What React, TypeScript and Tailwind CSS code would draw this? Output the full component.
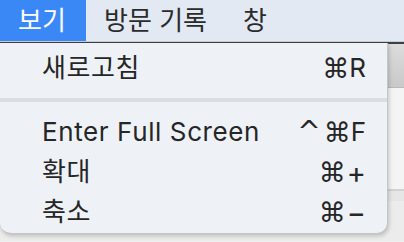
import React from "react";

const font = { fontFamily: 'Inter, "Noto Sans CJK KR", "DejaVu Sans", sans-serif' };

function Item({ label, shortcut }: { label: string; shortcut: React.ReactNode }) {
  return (
    <div className="flex h-[40px] items-center justify-between pl-[42px] pr-[21px]">
      <span className="text-[26px] leading-none tracking-[0.6px] text-[#262626]">{label}</span>
      <span className="flex items-center text-[26px] leading-none text-[#262626]">{shortcut}</span>
    </div>
  );
}

const Cmd = () => <span className="text-[27px] font-medium" style={{ fontFamily: '"DejaVu Sans", sans-serif' }}>⌘</span>;

export default function App() {
  return (
    <div className="relative h-[242px] w-[404px] overflow-hidden bg-[#f0f0f0]" style={font}>
      {/* menu bar */}
      <div className="flex h-[42px] items-stretch border-b border-[#c9ccd0] bg-[#e3e9f2] text-[26px] text-[#2b2b2b]">
        <div className="flex w-[86px] items-center justify-center bg-[#3a88f6] pr-[2px] text-white">보기</div>
        <div className="flex items-center pl-[18px]">방문 기록</div>
        <div className="flex items-center pl-[36px]">창</div>
      </div>
      {/* window content behind */}
      <div className="flex flex-col">
        <div className="h-[2px] bg-[#3c4148]" />
        <div className="h-[44px] border-b border-[#b8b8b8] bg-gradient-to-b from-[#dcdcdc] to-[#c9c9c9]" />
        <div className="h-[101px] bg-[#f4f4f4]" />
        <div className="h-[2px] bg-[#d2d2d2]" />
        <div className="h-[10px] bg-[#e6e6e6]" />
        <div className="h-[40px] bg-[#ececec]" />
      </div>
      {/* dropdown menu */}
      <div className="absolute left-0 top-[43px] w-[388px] rounded-b-[11px] border-r border-b border-[#c2c5c9] bg-[#eef2f6] pt-[5px] pb-[1px] shadow-[1px_2px_4px_rgba(0,0,0,0.2)]">
        <Item label="새로고침" shortcut={<><Cmd /><span>R</span></>} />
        <div className="flex h-[24px] items-center">
          <div className="h-[4px] w-full bg-[#dadee2]" />
        </div>
        <Item
          label="Enter Full Screen"
          shortcut={<><span className="mr-[3px] text-[28px]" style={{ fontFamily: '"DejaVu Sans", sans-serif' }}>^</span><Cmd /><span>F</span></>}
        />
        <Item label="확대" shortcut={<><Cmd /><span className="ml-[1px] text-[29px]">+</span></>} />
        <Item label="축소" shortcut={<><Cmd /><span className="ml-[1px] text-[29px]">−</span></>} />
      </div>
    </div>
  );
}
